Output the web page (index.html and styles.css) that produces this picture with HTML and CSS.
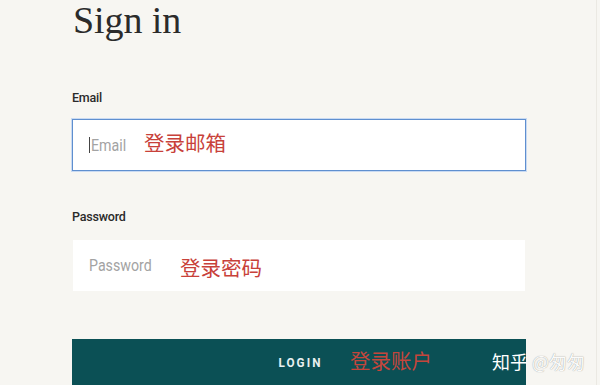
FILE: index.html
```html
<!DOCTYPE html>
<html lang="zh-CN">
<head>
<meta charset="utf-8">
<title>Sign in</title>
<link rel="stylesheet" href="styles.css">
</head>
<body>
<div class="page">
  <form class="signin">
    <h1 class="title">Sign in</h1>
    <div class="field field-email">
      <label class="label">Email</label>
      <div class="input input-focus">
        <span class="caret"></span>
        <span class="placeholder">Email</span>
        <span class="note note-email">登录邮箱</span>
      </div>
    </div>
    <div class="field field-password">
      <label class="label">Password</label>
      <div class="input">
        <span class="placeholder">Password</span>
        <span class="note note-password">登录密码</span>
      </div>
    </div>
    <div class="button">
      <span class="button-text">LOGIN</span>
      <span class="note note-login">登录账户</span>
    </div>
  </form>
  <div class="watermark"><span class="wm-a">知乎</span> <span class="wm-b">@匆匆</span></div>
</div>
</body>
</html>
```
FILE: styles.css
```css
html, body {
  margin: 0;
  padding: 0;
  background: #f7f6f2;
}
.page {
  position: relative;
  width: 596px;
  height: 385px;
  overflow: hidden;
  border-right: 1px solid #ebe9e3;
  font-family: Roboto, "Noto Sans CJK SC", sans-serif;
}
.signin {
  width: 454px;
  margin: 0 0 0 72px;
  padding-top: 1px;
}
.title {
  margin: 0;
  font-family: "Liberation Serif", "Times New Roman", serif;
  font-weight: 400;
  font-size: 38px;
  line-height: 38px;
  color: #2b2b2b;
  letter-spacing: -0.1px;
  padding-left: 1px;
}
.label {
  display: block;
  font-size: 12.5px;
  font-weight: 500;
  color: #2a2a2a;
  line-height: 14px;
  letter-spacing: -0.2px;
}
.field-email { margin-top: 52px; }
.field-email .label { margin-bottom: 14px; }
.field-password { margin-top: 39px; }
.field-password .label { margin-bottom: 16px; }
.input {
  position: relative;
  box-sizing: border-box;
  height: 52px;
  background: #fff;
  display: flex;
  align-items: center;
  padding-left: 16px;
}
.field-password .input {
  margin-left: 1px;
  margin-right: 1px;
  height: 51px;
}
.input-focus {
  border: 1px solid #5f8fcf;
  box-shadow: 0 0 0 1px #c9daf2;
}
.caret {
  width: 1px;
  height: 16px;
  background: #444;
  margin-right: 1px;
}
.placeholder {
  font-size: 16.5px;
  color: #a3a3a3;
  display: inline-block;
  transform: scaleX(0.86);
  transform-origin: left center;
}
.note {
  position: absolute;
  font-family: "Noto Sans CJK SC", sans-serif;
  font-size: 20.5px;
  color: #c8413a;
  line-height: 1;
}
.note-email { left: 71px; top: 12px; }
.note-password { left: 107px; top: 17px; }
.button {
  position: relative;
  margin-top: 48px;
  height: 60px;
  background: #0b5055;
  display: flex;
  justify-content: center;
  padding-top: 16px;
  box-sizing: border-box;
}
.button-text {
  color: #e9f1f1;
  font-size: 13px;
  font-weight: 700;
  letter-spacing: 2.3px;
  margin-left: 2px;
  line-height: 16px;
  display: inline-block;
  transform: scaleX(0.9);
}
.note-login {
  left: 278px;
  top: 11px;
  color: #c4463c;
}
.watermark {
  position: absolute;
  left: 492px;
  top: 350px;
  font-family: "Noto Sans CJK SC", sans-serif;
  font-size: 18px;
  line-height: 22px;
  color: #ffffff;
  white-space: nowrap;
}
.wm-b {
  color: #fbfbfa;
  text-shadow: 0 0 1px rgba(0,0,0,0.45);
}
```
